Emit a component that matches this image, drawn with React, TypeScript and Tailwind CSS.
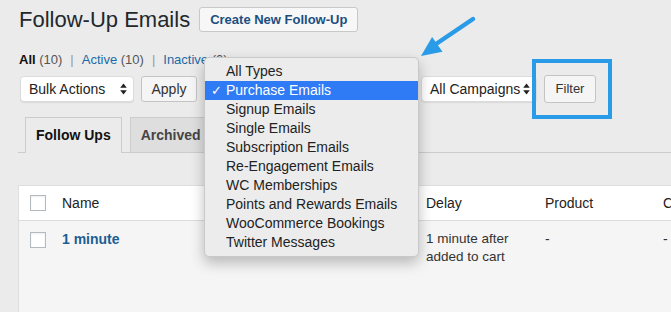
import React from 'react';

const types = [
  'All Types',
  'Purchase Emails',
  'Signup Emails',
  'Single Emails',
  'Subscription Emails',
  'Re-Engagement Emails',
  'WC Memberships',
  'Points and Rewards Emails',
  'WooCommerce Bookings',
  'Twitter Messages',
];

// flechitas arriba/abajo de un select nativo de macOS
const SelectArrows = () => (
  <svg width="7" height="12" viewBox="0 0 7 12" className="shrink-0">
    <path d="M3.5 0.5 L6.8 4.8 L0.2 4.8 Z" fill="#222" />
    <path d="M3.5 11.5 L6.8 7.2 L0.2 7.2 Z" fill="#222" />
  </svg>
);

const NativeSelect = ({ label, className }: { label: string; className: string }) => (
  <div
    className={`flex h-[26px] shrink-0 items-center justify-between overflow-hidden rounded-[4px] border border-[#dcdcdc] bg-white pl-[8px] pr-[6px] text-[14px] text-[#222] shadow-[0_1px_1px_rgba(0,0,0,0.08)] ${className}`}
  >
    <span className="whitespace-nowrap">{label}</span>
    <SelectArrows />
  </div>
);

const Checkbox = () => (
  <div className="h-[16px] w-[16px] border border-[#b4b9be] bg-white shadow-[inset_0_1px_2px_rgba(0,0,0,0.07)]" />
);

export default function App() {
  return (
    <div className="relative h-[312px] w-[671px] overflow-hidden bg-[#ebebeb] font-['Liberation_Sans','Helvetica',sans-serif] text-[#23282d]">
      <div className="pl-[18px] pt-[7px]">
        {/* Cabecera */}
        <div className="flex items-center gap-[9px]">
          <h1 className="ml-[1px] text-[22px] leading-[25px] text-[#23282d]">Follow-Up Emails</h1>
          <button className="h-[25px] rounded-[3px] border border-[#c8c8c8] bg-[#f7f7f7] px-[10px] text-[13px] font-bold text-[#1b4f80]">
            Create New Follow-Up
          </button>
        </div>

        {/* Filtros de estado */}
        <div className="ml-[1px] mt-[19px] flex items-center gap-[8px] text-[13px] leading-[18px] text-[#555]">
          <span>
            <b className="text-[#111]">All</b> (10)
          </span>
          <span className="text-[#999]">|</span>
          <span className="text-[#1b6aa5]">
            Active <span className="text-[#555]">(10)</span>
          </span>
          <span className="text-[#999]">|</span>
          <span className="text-[#1b6aa5]">
            Inactive <span className="text-[#555]">(0)</span>
          </span>
        </div>

        {/* Barra de acciones */}
        <div className="ml-[2px] mt-[6px] flex h-[28px] items-center gap-[7px]">
          <NativeSelect label="Bulk Actions" className="w-[114px]" />
          <button className="h-[26px] w-[56px] shrink-0 rounded-[3px] border border-[#c4c4c4] bg-[#f5f5f5] text-[14px] text-[#333]">
            Apply
          </button>
          {/* select de tipos, tapado por el menú abierto */}
          <NativeSelect label="" className="w-[210px]" />
          <NativeSelect label="All Campaigns" className="w-[116px]" />
          <button className="h-[28px] w-[52px] shrink-0 rounded-[3px] border border-[#c4c4c4] bg-[#f5f5f5] text-[13px] text-[#333]">
            Filter
          </button>
        </div>

        {/* Pestañas */}
        <div className="mt-[14px] flex h-[36px] items-end gap-[8px] border-b border-[#ccc] pl-[7px]">
          <div className="-mb-px flex h-[36px] items-center border border-b-0 border-[#ccc] bg-[#ebebeb] px-[10px] text-[14px] font-bold text-[#111]">
            Follow Ups
          </div>
          <div className="flex h-[35px] items-center border border-b-0 border-[#ccc] bg-[#dedede] px-[10px] text-[14px] font-bold text-[#444]">
            Archived
          </div>
        </div>

        {/* Tabla */}
        <div className="mt-[32px] h-[200px] border-l border-t border-[#dedede] bg-[#f5f5f5]">
          <div className="flex h-[35px] items-center border-b border-[#dcdcdc] bg-white text-[14px] text-[#222]">
            <div className="w-[43px] shrink-0 pl-[11px]">
              <Checkbox />
            </div>
            <div className="w-[364px] shrink-0">Name</div>
            <div className="w-[119px] shrink-0">Delay</div>
            <div className="w-[118px] shrink-0">Product</div>
            <div className="shrink-0 whitespace-nowrap">Campaign</div>
          </div>
          <div className="flex text-[14px] leading-[18px]">
            <div className="w-[43px] shrink-0 pl-[11px] pt-[11px]">
              <Checkbox />
            </div>
            <div className="w-[364px] shrink-0 pt-[9px] font-bold text-[#1b5e94]">1 minute</div>
            <div className="w-[119px] shrink-0 pt-[9px] text-[13.5px] text-[#333]">
              1 minute after
              <br />
              added to cart
            </div>
            <div className="w-[118px] shrink-0 pt-[9px] text-[#333]">-</div>
            <div className="shrink-0 pt-[9px] text-[#333]">-</div>
          </div>
        </div>
      </div>

      {/* Menú desplegable abierto */}
      <div className="absolute left-[204px] top-[57px] z-10 w-[215px] rounded-[5px] border border-[#c9c9c9] bg-[#ececec] py-[4px] shadow-[0_6px_14px_rgba(0,0,0,0.25)]">
        {types.map((t, i) => (
          <div
            key={t}
            className={`relative flex h-[19px] items-center pl-[21px] text-[14px] ${
              i === 1 ? 'bg-[#2f7bf5] text-white' : 'text-[#222]'
            }`}
          >
            {i === 1 && <span className="absolute left-[6px] text-[13px]">✓</span>}
            {t}
          </div>
        ))}
      </div>

      {/* Anotaciones */}
      <svg className="absolute left-0 top-0 z-20" width="671" height="312" viewBox="0 0 671 312" fill="none">
        <path d="M473 19 L436 44" stroke="#2a9be6" strokeWidth="4.5" strokeLinecap="round" />
        <path d="M421 56 L442.5 51.7 L432.1 37.1 Z" fill="#2a9be6" />
      </svg>
      <div className="absolute left-[532px] top-[59px] z-20 h-[60px] w-[80px] border-[4px] border-[#2a9be6]" />
    </div>
  );
}
